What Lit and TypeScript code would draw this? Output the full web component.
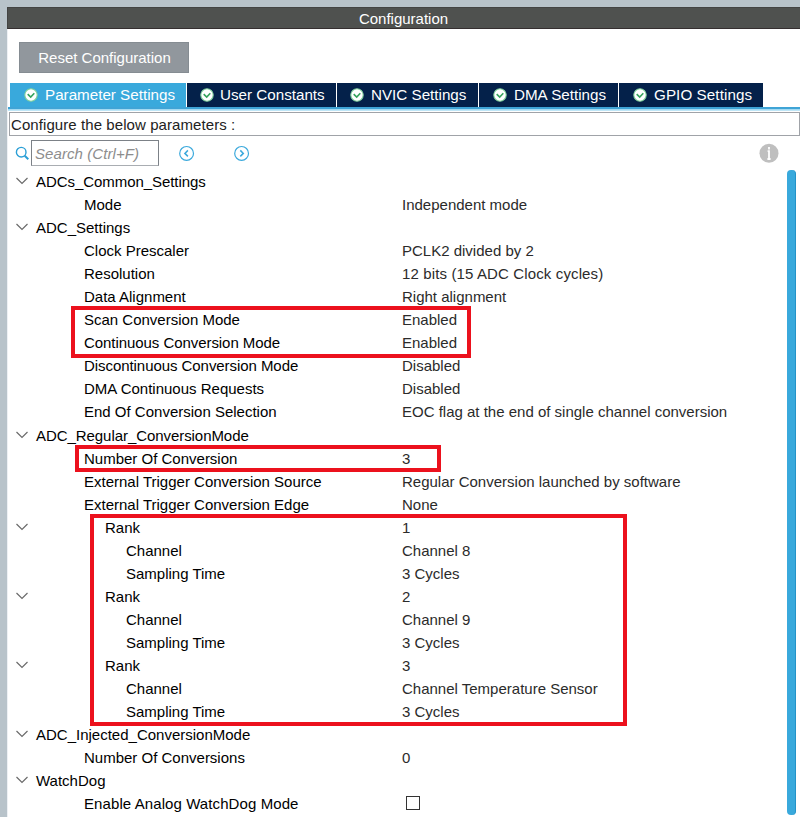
import { LitElement, html, css, svg, nothing } from "lit";
import { customElement } from "lit/decorators.js";
import { classMap } from "lit/directives/class-map.js";

type Row = { level: "group" | "param" | "rank" | "sub"; label: string; value?: string; check?: boolean; gap?: boolean; fit?: "tight" | "loose" | "wide" };

const rank = (n: string, channel: string): Row[] => [
  { level: "rank", label: "Rank", value: n },
  { level: "sub", label: "Channel", value: channel },
  { level: "sub", label: "Sampling Time", value: "3 Cycles" },
];

const ROWS: Row[] = [
  { level: "group", label: "ADCs_Common_Settings", fit: "tight" },
  { level: "param", label: "Mode", value: "Independent mode" },
  { level: "group", label: "ADC_Settings" },
  { level: "param", label: "Clock Prescaler", value: "PCLK2 divided by 2" },
  { level: "param", label: "Resolution", value: "12 bits (15 ADC Clock cycles)", fit: "wide" },
  { level: "param", label: "Data Alignment", value: "Right alignment" },
  { level: "param", label: "Scan Conversion Mode", value: "Enabled" },
  { level: "param", label: "Continuous Conversion Mode", value: "Enabled", fit: "tight" },
  { level: "param", label: "Discontinuous Conversion Mode", value: "Disabled", fit: "tight" },
  { level: "param", label: "DMA Continuous Requests", value: "Disabled" },
  { level: "param", label: "End Of Conversion Selection", value: "EOC flag at the end of single channel conversion" },
  { level: "group", label: "ADC_Regular_ConversionMode", gap: true, fit: "tight" },
  { level: "param", label: "Number Of Conversion", value: "3" },
  { level: "param", label: "External Trigger Conversion Source", value: "Regular Conversion launched by software" },
  { level: "param", label: "External Trigger Conversion Edge", value: "None" },
  ...rank("1", "Channel 8"),
  ...rank("2", "Channel 9"),
  ...rank("3", "Channel Temperature Sensor"),
  { level: "group", label: "ADC_Injected_ConversionMode" },
  { level: "param", label: "Number Of Conversions", value: "0" },
  { level: "group", label: "WatchDog" },
  { level: "param", label: "Enable Analog WatchDog Mode", check: true, fit: "loose" },
];

const TABS = [
  { label: "Parameter Settings", cls: "t1" },
  { label: "User Constants", cls: "t2" },
  { label: "NVIC Settings", cls: "t3" },
  { label: "DMA Settings", cls: "t4" },
  { label: "GPIO Settings", cls: "t5" },
];

const okIcon = html`<svg class="ok" width="14" height="14" viewBox="0 0 14 14">
  <circle cx="7" cy="7" r="6.2" fill="#fff" stroke="#7fd09a" stroke-width="1.1" />
  <path d="M3.7 6.2 6.7 9.1 10.3 5.3" fill="none" stroke="#35a35c" stroke-width="1.6" />
</svg>`;

const navIcon = (d: string) => html`<svg class="nav" width="16" height="16" viewBox="0 0 16 16" fill="none" stroke="#3ba9dc">
  <circle cx="7.6" cy="8.4" r="6.9" stroke-width="1.2" />
  ${svg`<path d=${d} stroke-width="1.5" />`}
</svg>`;

const chevron = html`<svg class="chev" width="12" height="8" viewBox="0 0 12 8">
  <path d="M.5 1 6 6.4 11.5 1" fill="none" stroke="#6a6a6a" stroke-width="1.2" />
</svg>`;

@customElement("app-root")
export class AppRoot extends LitElement {
  static styles = css`
    :host {
      display: block;
      position: relative;
      width: 800px;
      height: 817px;
      box-sizing: border-box;
      padding: 7px 0 0 7px;
      overflow: hidden;
      background: #b8c3ca;
      font: 15px/23px "Liberation Sans", Arial, sans-serif;
      color: #000;
      white-space: nowrap;
    }
    .panel { height: 810px; background: #fff; border-left: 1px solid #edf0f4; box-sizing: border-box; }
    .title {
      height: 22px; margin-left: -1px; box-sizing: border-box;
      background: #4f514f; border: 1px solid #434443; border-right: 0; border-bottom-color: #352f30;
      color: #fff; text-align: center; line-height: 22px; padding-right: 1px;
    }
    .reset {
      width: 170px; height: 31px; margin: 13px 0 10px 11px; box-sizing: border-box;
      background: #91979d; border: 1px solid #858c92; padding-left: 1px;
      color: #fff; text-align: center; line-height: 29px;
    }
    .tabs { display: flex; gap: 1px; height: 24px; margin-left: 2px; }
    .tab {
      display: flex; align-items: center; box-sizing: border-box; padding-left: 14px; gap: 7px;
      background: #04214a; color: #fff; height: 24px; line-height: 24px; font-size: 15.2px;
    }
    .t1 { background: #39a9dc; width: 176px; }
    .t2 { width: 149px; padding-left: 13px; gap: 6px; }
    .t3 { width: 141px; padding-left: 13px; }
    .t4 { width: 139px; padding-left: 14px; }
    .t5 { width: 144px; padding-left: 14px; letter-spacing: .08px; }
    .rule { height: 4px; background: linear-gradient(#3fa4d6 0 2px, #a3daf2 2px 3px, #bfe6f7 3px); }
    .intro {
      height: 24px; margin-left: 1px; box-sizing: border-box; margin-top: 1px;
      border: 1px solid #a0a3a8; padding-left: 1px; line-height: 23px; color: #222;
      letter-spacing: .08px;
    }
    .tools { display: flex; align-items: center; height: 34px; padding-left: 7px; }
    .search {
      width: 128px; height: 26px; box-sizing: border-box; border: 1px solid #7c8187;
      border-bottom-color: #a9adb2; padding-left: 3px; margin: 0 20px 0 0;
      line-height: 25px; font-style: italic; color: #8d8d8d; letter-spacing: .08px;
    }
    .nav { margin-right: 39px; }
    .info { margin-left: 470px; }
    .row { display: grid; grid-template-columns: 28px 366px auto; height: 23px; align-items: center; }
    .gap { margin-top: 1px; }
    .chev { display: block; margin-left: 8px; margin-top: -1px; }
    .param .label { padding-left: 48px; }
    .rank .label { padding-left: 69px; }
    .sub .label { padding-left: 90px; }
    .tight .label { letter-spacing: -.06px; }
    .loose .label { letter-spacing: .09px; }
    .wide .value { letter-spacing: .13px; }
    .value { color: #2b2b2b; }
    .box { width: 14px; height: 14px; box-sizing: border-box; border: 1px solid #333; margin-left: 4px; margin-top: -2px; }
    .bar { position: absolute; left: 787px; top: 170px; width: 9px; height: 645px; border-radius: 4px; box-sizing: border-box; background: #39a9dc; border-right: 1px solid #2493c8; }
    .mark { position: absolute; box-sizing: border-box; border: 4px solid #ec111d; }
    .m1 { left: 71px; top: 306px; width: 400px; height: 52px; }
    .m2 { left: 75px; top: 445px; width: 366px; height: 27px; }
    .m3 { left: 90px; top: 514px; width: 537px; height: 212px; }
  `;

  render() {
    return html`
      <div class="panel">
        <div class="title">Configuration</div>
        <div class="reset">Reset Configuration</div>
        <div class="tabs">
          ${TABS.map((t) => html`<div class="tab ${t.cls}">${okIcon}<span>${t.label}</span></div>`)}
        </div>
        <div class="rule"></div>
        <div class="intro">Configure the below parameters :</div>
        <div class="tools">
          <svg width="16" height="16" viewBox="0 0 16 16" fill="none" stroke="#2b9fd6">
            <circle cx="6.2" cy="7.2" r="4.8" stroke-width="1.4" />
            <path d="M9.7 10.8 13.3 14.2" stroke-width="2" />
          </svg>
          <div class="search">Search (Ctrl+F)</div>
          ${navIcon("M8.9 5.4 5.9 8.4 8.9 11.4")}
          ${navIcon("M6.3 5.4 9.3 8.4 6.3 11.4")}
          <svg class="info" width="20" height="20" viewBox="0 0 20 20">
            <circle cx="10" cy="10.3" r="9.5" fill="#bfbfbf" />
            <path d="M10 3.9v2.5M8.6 8.2H10v7.6M8.4 16h3.2" fill="none" stroke="#fff" stroke-width="1.8" />
          </svg>
        </div>
        ${ROWS.map(
          (r) => html`<div class=${classMap({ row: true, [r.level]: true, gap: !!r.gap, [r.fit ?? "plain"]: true })}>
            <span>${r.level === "group" || r.level === "rank" ? chevron : nothing}</span>
            <span class="label">${r.label}</span>
            ${r.check ? html`<span class="box"></span>` : html`<span class="value">${r.value ?? ""}</span>`}
          </div>`
        )}
      </div>
      <div class="bar"></div>
      <div class="mark m1"></div>
      <div class="mark m2"></div>
      <div class="mark m3"></div>
    `;
  }
}
